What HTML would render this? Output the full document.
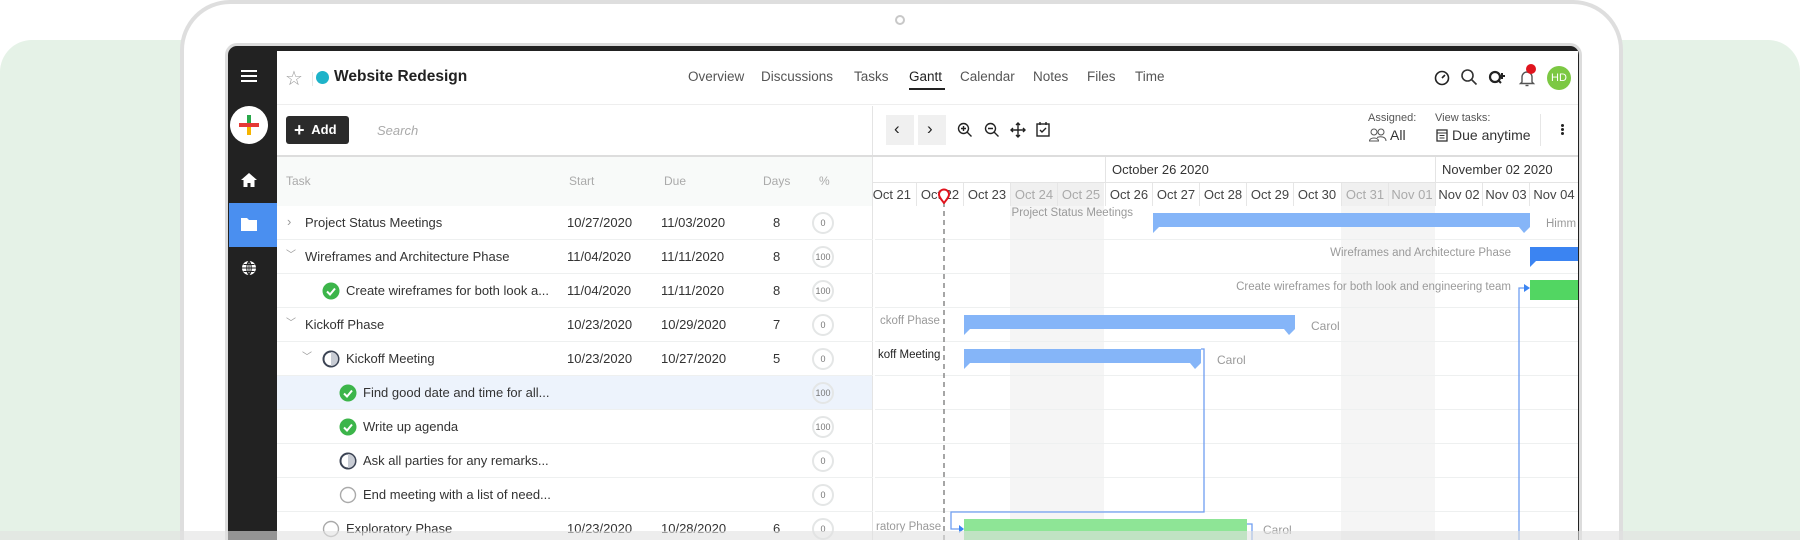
<!DOCTYPE html>
<html style="width:1800px;height:540px;overflow:hidden"><head><meta charset="utf-8"><style>
*{box-sizing:border-box;margin:0;padding:0}
body{width:1800px;height:540px;overflow:hidden;background:#fff;font-family:"Liberation Sans",sans-serif;position:relative;color:#333}
#w{position:absolute;left:0;top:0;width:1800px;height:540px;overflow:hidden}
.a{position:absolute}
.t{position:absolute;white-space:nowrap}
.row{position:absolute;left:277px;width:1301px;height:34px;border-bottom:1px solid #eef0f0}
.pc{position:absolute;left:812px;width:22px;height:22px;border:2px solid #e4e6e6;border-radius:50%;font-size:9px;color:#777;text-align:center;line-height:18px}
.day{position:absolute;top:183px;height:23px;width:47px;border-left:1px solid #e6e6e6;font-size:13px;color:#444;text-align:center;line-height:23px}
.we{background:#f0f0f0;color:#aaa}
.gl{position:absolute;font-size:11.5px;color:#9a9a9a;white-space:nowrap;text-align:right}
.nav{position:absolute;top:69px;font-size:13.5px;color:#555;white-space:nowrap}
</style></head><body><div id="w">
<div class="a" style="left:0;top:40px;width:1800px;height:500px;background:#e5f2e7;border-radius:32px 32px 0 0"></div>
<div class="a" style="left:180px;top:0;width:1443px;height:540px;background:#fff;border:4px solid #dedede;border-bottom:none;border-radius:50px 50px 0 0"></div>
<div class="a" style="left:895px;top:15px;width:10px;height:10px;border:2px solid #c8c8c8;border-radius:50%"></div>
<div class="a" style="left:225px;top:43px;width:1357px;height:497px;background:#222;border:3px solid #dcdcdc;border-bottom:none;border-radius:12px 12px 0 0"></div>
<div class="a" style="left:277px;top:51px;width:1301px;height:489px;background:#fff"></div>
<div class="a" style="left:241px;top:70px;width:16px;height:2px;background:#fff;box-shadow:0 5px 0 #fff,0 10px 0 #fff"></div>
<div class="a" style="left:230px;top:106px;width:38px;height:38px;border-radius:50%;background:#fff"></div>
<div class="a" style="left:247px;top:115px;width:4px;height:20px;background:linear-gradient(#2aa84a 50%,#f5b400 50%)"></div>
<div class="a" style="left:239px;top:123px;width:20px;height:4px;background:#e53935"></div>
<svg class="a" style="left:240px;top:172px" width="18" height="16" viewBox="0 0 18 16"><path d="M9 1L1 8h2.5v7h4v-4h3v4h4V8H17z" fill="#fff"/></svg>
<div class="a" style="left:229px;top:203px;width:48px;height:44px;background:#4a8ff0"></div>
<svg class="a" style="left:241px;top:217px" width="16" height="14"><path d="M0 1h6l2 2h8v11H0z" fill="#fff"/></svg>
<svg class="a" style="left:241px;top:260px" width="16" height="16" viewBox="0 0 16 16"><circle cx="8" cy="8" r="7" fill="#fff"/><path d="M1 8h14M8 1v14M2.5 4.5h11M2.5 11.5h11M8 1c-3 3-3 11 0 14M8 1c3 3 3 11 0 14" stroke="#222" stroke-width="1" fill="none"/></svg>
<div class="a" style="left:277px;top:104px;width:1301px;height:1px;background:#eee"></div>
<div class="t" style="left:285px;top:66px;font-size:20px;color:#999">☆</div>
<div class="a" style="left:312px;top:72px;width:1px;height:14px;background:#e6e6e6"></div>
<div class="a" style="left:316px;top:71px;width:13px;height:13px;border-radius:50%;background:#1eb3c9"></div>
<div class="t" style="left:334px;top:68px;font-size:15.5px;font-weight:bold;color:#222">Website Redesign</div>
<div class="nav" style="left:688px">Overview</div>
<div class="nav" style="left:761px">Discussions</div>
<div class="nav" style="left:854px">Tasks</div>
<div class="nav" style="left:909px;color:#222">Gantt</div>
<div class="a" style="left:909px;top:88px;width:36px;height:2px;background:#222"></div>
<div class="nav" style="left:960px">Calendar</div>
<div class="nav" style="left:1033px">Notes</div>
<div class="nav" style="left:1087px">Files</div>
<div class="nav" style="left:1135px">Time</div>
<svg class="a" style="left:1433px;top:69px" width="18" height="18"><circle cx="9" cy="9" r="6.5" stroke="#222" stroke-width="1.6" fill="none"/><path d="M9 9l3-3" stroke="#222" stroke-width="1.6"/></svg>
<svg class="a" style="left:1460px;top:68px" width="18" height="18"><circle cx="7.5" cy="7.5" r="5.5" stroke="#333" stroke-width="1.6" fill="none"/><path d="M11.5 11.5l5 5" stroke="#333" stroke-width="1.6"/></svg>
<svg class="a" style="left:1488px;top:69px" width="18" height="18"><circle cx="7" cy="8" r="5" stroke="#222" stroke-width="2.2" fill="none"/><path d="M10 11l3 3M11 7h6M14 4v6" stroke="#222" stroke-width="2"/></svg>
<svg class="a" style="left:1518px;top:68px" width="18" height="20"><path d="M4 14V9a5 5 0 0 1 10 0v5l1.5 1.5h-13z" stroke="#555" stroke-width="1.4" fill="none"/><path d="M7.5 17.5h3" stroke="#555" stroke-width="1.4"/></svg>
<div class="a" style="left:1526px;top:64px;width:10px;height:10px;border-radius:50%;background:#e0141e"></div>
<div class="a" style="left:1547px;top:66px;width:24px;height:24px;border-radius:50%;background:#7cc843;color:#fff;font-size:11px;text-align:center;line-height:24px">HD</div>
<div class="a" style="left:286px;top:116px;width:63px;height:28px;background:#2b2b2b;border-radius:3px;color:#fff;font-size:13px;font-weight:bold;line-height:28px;padding-left:8px"><span style="font-size:18px;vertical-align:-2px">+</span>&nbsp; Add</div>
<div class="t" style="left:377px;top:123px;font-size:13px;color:#aaa;font-style:italic">Search</div>
<div class="a" style="left:872px;top:106px;width:1px;height:434px;background:#e4e4e4"></div>
<div class="a" style="left:886px;top:115px;width:28px;height:30px;background:#f0f0f0"></div>
<div class="a" style="left:918px;top:115px;width:28px;height:30px;background:#f0f0f0"></div>
<div class="t" style="left:894px;top:119px;font-size:17px;color:#222">‹</div>
<div class="t" style="left:927px;top:119px;font-size:17px;color:#222">›</div>
<svg class="a" style="left:957px;top:122px" width="16" height="16"><circle cx="6.5" cy="6.5" r="5" stroke="#222" stroke-width="1.4" fill="none"/><path d="M10 10l4.5 4.5M4 6.5h5M6.5 4v5" stroke="#222" stroke-width="1.4"/></svg>
<svg class="a" style="left:984px;top:122px" width="16" height="16"><circle cx="6.5" cy="6.5" r="5" stroke="#222" stroke-width="1.4" fill="none"/><path d="M10 10l4.5 4.5M4 6.5h5" stroke="#222" stroke-width="1.4"/></svg>
<svg class="a" style="left:1010px;top:122px" width="16" height="16"><path d="M8 1v14M1 8h14M6 3l2-2 2 2M6 13l2 2 2-2M3 6L1 8l2 2M13 6l2 2-2 2" stroke="#222" stroke-width="1.4" fill="none"/></svg>
<svg class="a" style="left:1036px;top:121px" width="14" height="16"><rect x="1" y="3" width="12" height="12" stroke="#222" stroke-width="1.4" fill="none"/><path d="M4 1v3M10 1v3M4 9l2 2 4-4" stroke="#222" stroke-width="1.4" fill="none"/></svg>
<div class="t" style="left:1368px;top:112px;font-size:11px;color:#555">Assigned:</div>
<svg class="a" style="left:1369px;top:128px" width="18" height="14"><circle cx="5" cy="4" r="3" stroke="#555" fill="none"/><circle cx="12" cy="4" r="3" stroke="#555" fill="none"/><path d="M0.5 13c0-4 9-4 9 0zM8 9.5c3-1.5 9-1 9 3.5" stroke="#555" fill="none"/></svg>
<div class="t" style="left:1390px;top:127px;font-size:14px;color:#333">All</div>
<div class="t" style="left:1435px;top:112px;font-size:11px;color:#555">View tasks:</div>
<svg class="a" style="left:1436px;top:128px" width="12" height="14"><rect x="1" y="2" width="10" height="11" stroke="#333" stroke-width="1.3" fill="none"/><path d="M1 5h10M3.5 7.5h5M3.5 10h5" stroke="#333"/></svg>
<div class="t" style="left:1452px;top:127px;font-size:14px;color:#333">Due anytime</div>
<div class="a" style="left:1540px;top:114px;width:1px;height:32px;background:#e6e6e6"></div>
<div class="a" style="left:1561px;top:124px;width:3px;height:3px;background:#222;border-radius:50%;box-shadow:0 4px 0 #222,0 8px 0 #222"></div>
<div class="a" style="left:277px;top:155px;width:1301px;height:2px;background:#ddd"></div>
<div class="a" style="left:277px;top:157px;width:595px;height:49px;background:#f8faf9"></div>
<div class="t" style="left:286px;top:174px;font-size:12px;color:#aaa">Task</div>
<div class="t" style="left:569px;top:174px;font-size:12px;color:#aaa">Start</div>
<div class="t" style="left:664px;top:174px;font-size:12px;color:#aaa">Due</div>
<div class="t" style="left:763px;top:174px;font-size:12px;color:#aaa">Days</div>
<div class="t" style="left:819px;top:174px;font-size:12px;color:#aaa">%</div>
<div class="a" style="left:873px;top:182px;width:705px;height:1px;background:#e4e4e4"></div>
<div class="a" style="left:1105px;top:157px;width:1px;height:49px;background:#e4e4e4"></div>
<div class="a" style="left:1435px;top:157px;width:1px;height:49px;background:#e4e4e4"></div>
<div class="t" style="left:1112px;top:162px;font-size:13px;color:#333">October 26 2020</div>
<div class="t" style="left:1442px;top:162px;font-size:13px;color:#333">November 02 2020</div>
<div class="a" style="left:1010px;top:206px;width:94px;height:334px;background:#f5f5f5"></div>
<div class="a" style="left:1341px;top:206px;width:94px;height:334px;background:#f5f5f5"></div>
<div class="day" style="left:869px;border-left:none;text-align:right;padding-right:4px;width:46px;overflow:hidden">Oct 21</div>
<div class="day" style="left:916px">Oct 22</div>
<div class="day" style="left:963px">Oct 23</div>
<div class="day we" style="left:1010px">Oct 24</div>
<div class="day we" style="left:1057px">Oct 25</div>
<div class="day" style="left:1105px">Oct 26</div>
<div class="day" style="left:1152px">Oct 27</div>
<div class="day" style="left:1199px">Oct 28</div>
<div class="day" style="left:1246px">Oct 29</div>
<div class="day" style="left:1293px">Oct 30</div>
<div class="day we" style="left:1341px">Oct 31</div>
<div class="day we" style="left:1388px">Nov 01</div>
<div class="day" style="left:1435px">Nov 02</div>
<div class="day" style="left:1482px">Nov 03</div>
<div class="day" style="left:1529px;width:49px">Nov 04</div>
<div class="row" style="top:206px"></div>
<div class="row" style="top:240px"></div>
<div class="row" style="top:274px"></div>
<div class="row" style="top:308px"></div>
<div class="row" style="top:342px"></div>
<div class="row" style="top:376px;width:595px;background:#edf3fc"></div>
<div class="row" style="top:376px;left:873px;width:705px;background:transparent"></div>
<div class="row" style="top:410px"></div>
<div class="row" style="top:444px"></div>
<div class="row" style="top:478px"></div>
<div style="font-size:13px;color:#333">
<div class="t" style="left:287px;top:214px;color:#999">›</div>
<div class="t" style="left:305px;top:215px">Project Status Meetings</div>
<div class="t" style="left:567px;top:215px">10/27/2020</div><div class="t" style="left:661px;top:215px">11/03/2020</div><div class="t" style="left:773px;top:215px">8</div>
<div class="t" style="left:286px;top:246px;color:#999;font-size:10px">﹀</div>
<div class="t" style="left:305px;top:249px">Wireframes and Architecture Phase</div>
<div class="t" style="left:567px;top:249px">11/04/2020</div><div class="t" style="left:661px;top:249px">11/11/2020</div><div class="t" style="left:773px;top:249px">8</div>
<div class="t" style="left:346px;top:283px">Create wireframes for both look a...</div>
<div class="t" style="left:567px;top:283px">11/04/2020</div><div class="t" style="left:661px;top:283px">11/11/2020</div><div class="t" style="left:773px;top:283px">8</div>
<div class="t" style="left:286px;top:314px;color:#999;font-size:10px">﹀</div>
<div class="t" style="left:305px;top:317px">Kickoff Phase</div>
<div class="t" style="left:567px;top:317px">10/23/2020</div><div class="t" style="left:661px;top:317px">10/29/2020</div><div class="t" style="left:773px;top:317px">7</div>
<div class="t" style="left:302px;top:348px;color:#999;font-size:10px">﹀</div>
<div class="t" style="left:346px;top:351px">Kickoff Meeting</div>
<div class="t" style="left:567px;top:351px">10/23/2020</div><div class="t" style="left:661px;top:351px">10/27/2020</div><div class="t" style="left:773px;top:351px">5</div>
<div class="t" style="left:363px;top:385px">Find good date and time for all...</div>
<div class="t" style="left:363px;top:419px">Write up agenda</div>
<div class="t" style="left:363px;top:453px">Ask all parties for any remarks...</div>
<div class="t" style="left:363px;top:487px">End meeting with a list of need...</div>
<div class="t" style="left:346px;top:521px">Exploratory Phase</div>
<div class="t" style="left:567px;top:521px">10/23/2020</div><div class="t" style="left:661px;top:521px">10/28/2020</div><div class="t" style="left:773px;top:521px">6</div>
</div>
<svg class="a" style="left:322px;top:282px" width="18" height="18"><circle cx="9" cy="9" r="8.5" fill="#3cb54a"/><path d="M5 9.5l3 3 5-6" stroke="#fff" stroke-width="2" fill="none"/></svg>
<svg class="a" style="left:322px;top:350px" width="18" height="18"><circle cx="9" cy="9" r="7.5" stroke="#3c4454" stroke-width="2" fill="#fff"/><path d="M9 2a7 7 0 0 1 0 14z" fill="#c8ccd4"/></svg>
<svg class="a" style="left:339px;top:384px" width="18" height="18"><circle cx="9" cy="9" r="8.5" fill="#3cb54a"/><path d="M5 9.5l3 3 5-6" stroke="#fff" stroke-width="2" fill="none"/></svg>
<svg class="a" style="left:339px;top:418px" width="18" height="18"><circle cx="9" cy="9" r="8.5" fill="#3cb54a"/><path d="M5 9.5l3 3 5-6" stroke="#fff" stroke-width="2" fill="none"/></svg>
<svg class="a" style="left:339px;top:452px" width="18" height="18"><circle cx="9" cy="9" r="7.5" stroke="#3c4454" stroke-width="2" fill="#fff"/><path d="M9 2a7 7 0 0 1 0 14z" fill="#c8ccd4"/></svg>
<svg class="a" style="left:339px;top:486px" width="18" height="18"><circle cx="9" cy="9" r="7.5" stroke="#aaa" stroke-width="1.4" fill="#fff"/></svg>
<svg class="a" style="left:322px;top:520px" width="18" height="18"><circle cx="9" cy="9" r="7.5" stroke="#aaa" stroke-width="1.4" fill="#fff"/></svg>
<div class="pc" style="top:212px">0</div>
<div class="pc" style="top:246px">100</div>
<div class="pc" style="top:280px">100</div>
<div class="pc" style="top:314px">0</div>
<div class="pc" style="top:348px">0</div>
<div class="pc" style="top:382px">100</div>
<div class="pc" style="top:416px">100</div>
<div class="pc" style="top:450px">0</div>
<div class="pc" style="top:484px">0</div>
<div class="pc" style="top:518px">0</div>
<svg class="a" style="left:873px;top:183px" width="705" height="357">
<g fill="#85b5f8">
<path d="M280 30h377v14l-6 6-5-6H286l-6 6z"/>
<path d="M91 132h331v14l-6 6-5-6H97l-6 6z"/>
<path d="M91 166h237v14l-6 6-5-6H97l-6 6z"/>
</g>
<path d="M657 64h50v14H663l-6 6z" fill="#3b84f2"/>
<rect x="657" y="97" width="50" height="20" fill="#52d662"/>
<rect x="91" y="336" width="283" height="30" fill="#8ee596"/>
<g stroke="#6f9ef0" stroke-width="1.3" fill="none">
<path d="M328 166h3v163H78v17h9"/>
<path d="M374 341h5v30"/>
<path d="M646 360V105h8"/>
</g>
<path d="M651 101l6 4-6 4z" fill="#3b84f2"/>
<path d="M86 342l5 4-5 4z" fill="#3b84f2"/>
<path d="M71 10v350" stroke="#888" stroke-width="1.5" stroke-dasharray="5,4"/>
</svg>
<svg class="a" style="left:937px;top:188px" width="14" height="16"><path d="M7 15c-3-4-5-6-5-8.5a5 5 0 0 1 10 0C12 9 10 11 7 15z" fill="#fff" stroke="#e0141e" stroke-width="2"/></svg>
<div class="gl" style="right:667px;top:207px">Project Status Meetings</div>
<div class="gl" style="left:1546px;top:218px">Himm</div>
<div class="gl" style="right:289px;top:247px">Wireframes and Architecture Phase</div>
<div class="gl" style="right:289px;top:281px">Create wireframes for both look and engineering team</div>
<div class="gl" style="left:880px;top:315px">ckoff Phase</div>
<div class="gl" style="left:1311px;top:319px;font-size:12px">Carol</div>
<div class="gl" style="left:878px;top:349px;color:#222">koff Meeting</div>
<div class="gl" style="left:1217px;top:353px;font-size:12px">Carol</div>
<div class="gl" style="left:876px;top:521px">ratory Phase</div>
<div class="gl" style="left:1263px;top:523px;font-size:12px">Carol</div>
<div class="a" style="left:873px;top:206px;width:2px;height:334px;background:#fff"></div>
<div class="a" style="left:0;top:531px;width:1800px;height:9px;background:rgba(225,225,225,0.6)"></div>
</div></body></html>
